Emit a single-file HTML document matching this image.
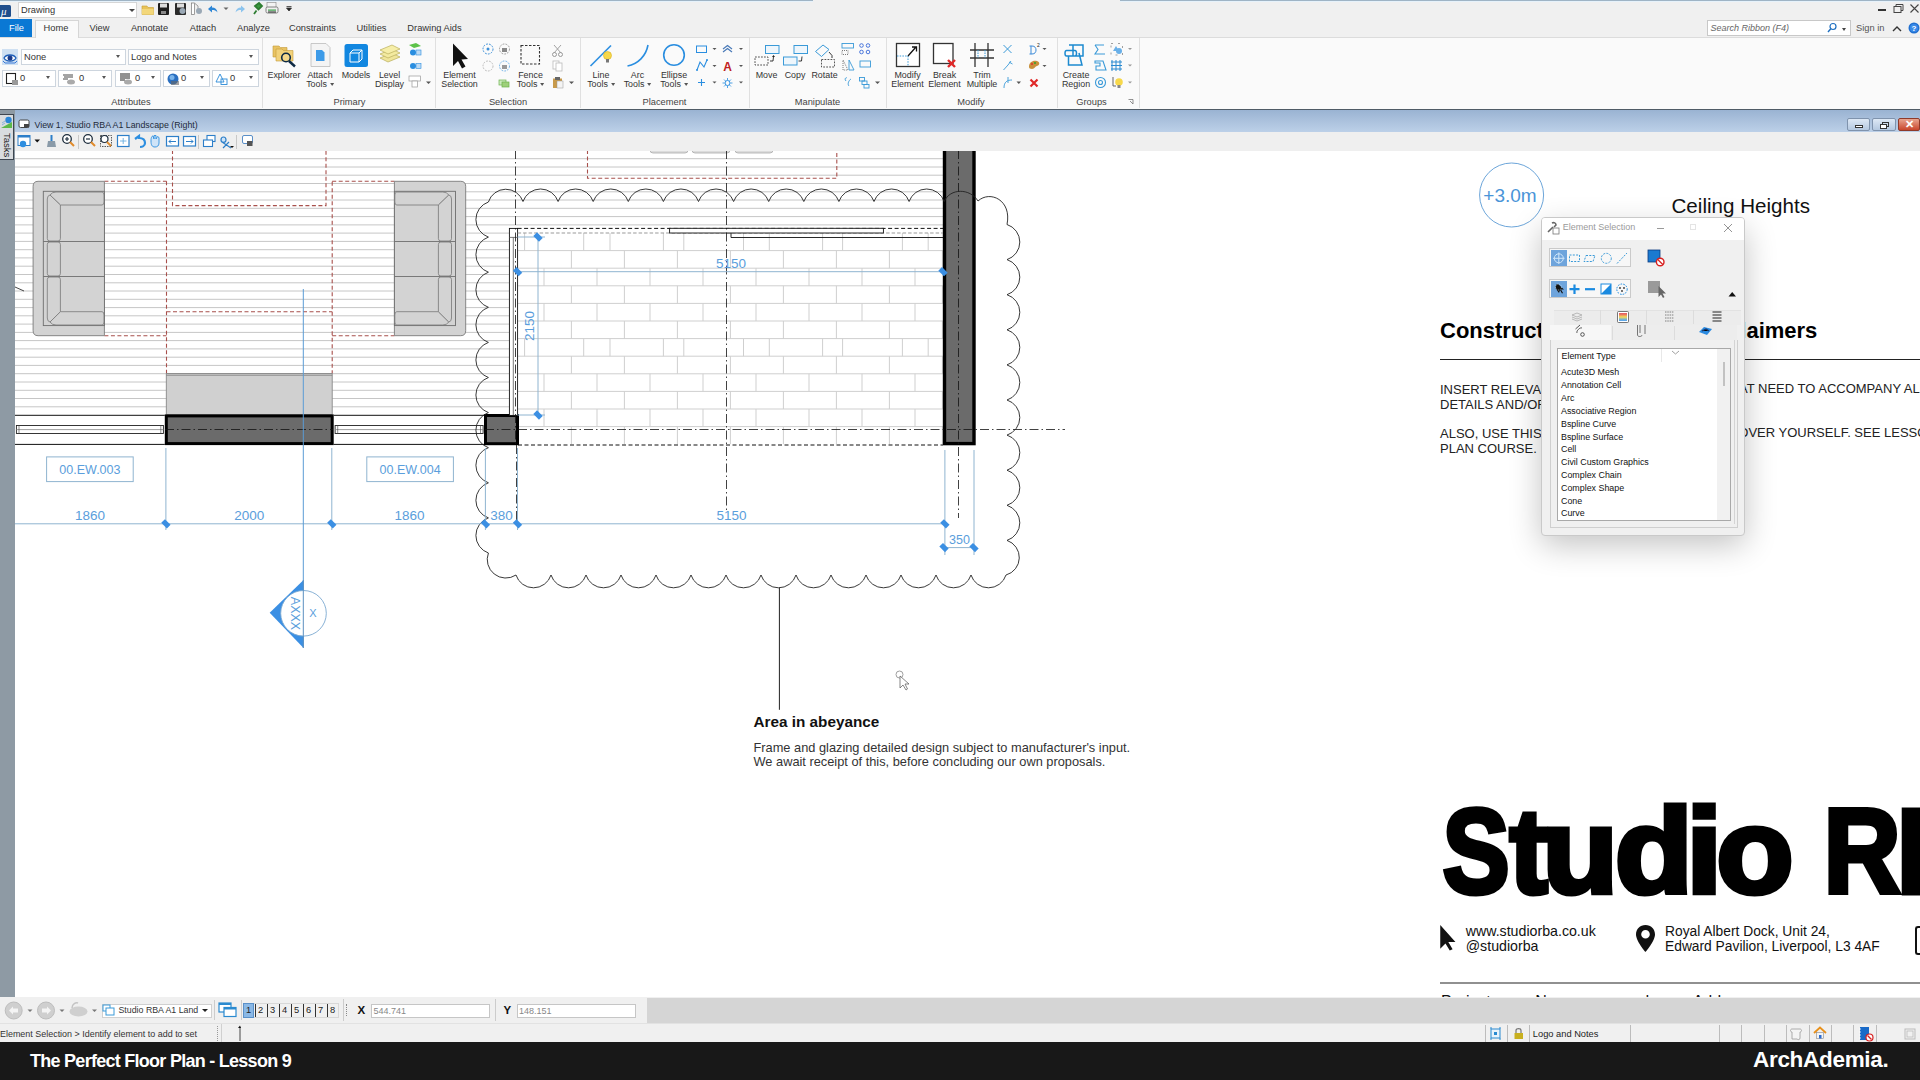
<!DOCTYPE html>
<html><head><meta charset="utf-8">
<style>
*{margin:0;padding:0;box-sizing:border-box}
html,body{width:1920px;height:1080px;overflow:hidden;background:#fff;font-family:"Liberation Sans",sans-serif;font-size:9.3px;color:#333}
.a{position:absolute}
.t{position:absolute;white-space:nowrap;line-height:1}
.c{position:absolute;white-space:nowrap;line-height:1;transform:translateX(-50%)}
svg{position:absolute;overflow:visible}

</style></head><body>
<div class="a" style="left:0;top:0;width:1920px;height:37px;background:#f0f0f0"></div>
<div class="a" style="left:0;top:0;width:813px;height:2px;background:linear-gradient(#9fb4c5 50%,#e6f2fb 50%)"></div>
<div class="a" style="left:1120px;top:0;width:800px;height:2px;background:linear-gradient(#9fb4c5 50%,#e6f2fb 50%)"></div>
<div class="a" style="left:0;top:37px;width:1920px;height:73px;background:#fafafa;border-top:1px solid #dcdcdc;border-bottom:1px solid #555d66"></div>
<div class="a" style="left:0;top:110px;width:15px;height:887px;background:#8e9aa4"></div>
<div class="a" style="left:0;top:997px;width:1920px;height:45px;background:#f0f0f0"></div>
<div class="a" style="left:0;top:1042px;width:1920px;height:38px;background:#181818">
<div class="t" style="left:30px;top:10px;font-size:18px;font-weight:bold;color:#fff;letter-spacing:-0.73px">The Perfect Floor Plan - Lesson 9</div>
<div class="t" style="left:1753px;top:7px;font-size:22.5px;font-weight:bold;color:#fff;letter-spacing:-0.3px">ArchAdemia.</div>
</div>
<svg width="14" height="14" style="left:0;top:4px"><rect x="-2" y="1" width="13" height="12" rx="1.5" fill="#1f4e8c"/><text x="1" y="10.5" font-family="Liberation Serif" font-style="italic" font-size="11" fill="#fff">μ</text></svg>
<div class="a" style="left:18px;top:2px;width:119px;height:15.5px;background:#fff;border:1px solid #d6d6d6"><div class="t" style="left:2px;top:2.5px;font-size:9.3px;color:#333">Drawing</div><div class="a" style="left:110px;top:6px;border:3px solid transparent;border-top:3.5px solid #444;border-bottom:none"></div></div>
<svg width="160" height="19" style="left:140px;top:0" viewBox="140 0 160 19">
<path d="M142 6H147L148 7.5H153.5V14.5H142Z" fill="#e8c35a" stroke="#c8a030" stroke-width="0.6"/><path d="M142 9H153.5V14.5H142Z" fill="#f3d77a"/>
<rect x="158" y="3" width="11" height="12" rx="1" fill="#1e1e1e"/><rect x="160" y="3.5" width="7" height="4" fill="#ddd"/><rect x="161" y="11" width="5" height="3" fill="#888"/>
<rect x="175" y="3" width="11" height="12" rx="1" fill="#2a2a2a"/><rect x="177" y="3.5" width="7" height="4" fill="#ddd"/><circle cx="182.5" cy="11" r="3" fill="#9aa8b5"/>
<rect x="191.5" y="3" width="3" height="11.5" fill="#fff" stroke="#777" stroke-width="0.7"/><path d="M195 3.5L198 6V9" stroke="#888" stroke-width="0.8" fill="none"/><circle cx="199" cy="11" r="3" fill="#9aa8b5"/>
<path d="M208 9L212 5.5V7.5C215 7.5 217 9 217.5 12.5C216 10.5 214.5 10 212 10V12.5Z" fill="#2d86d6"/>
<path d="M223.5 7.5H228.5L226 10Z" fill="#666"/>
<path d="M245 9L241 5.5V7.5C238 7.5 236 9 235.5 12.5C237 10.5 238.5 10 241 10V12.5Z" fill="#8cc4ee"/>
<path d="M254 14L256.5 10.5M255 6L259 3L262 6L258.5 9.5Z" stroke="#2e7d32" stroke-width="1.8" fill="#3a9a3f"/>
<rect x="267" y="2.5" width="9" height="5" fill="#f3f3f3" stroke="#888" stroke-width="0.6"/><rect x="266" y="7" width="12" height="6" rx="1.5" fill="#f0f0f0" stroke="#666" stroke-width="0.8"/><rect x="268" y="9.5" width="8" height="1.2" fill="#3aa04a"/><rect x="268" y="11.5" width="8" height="1" fill="#222"/>
<path d="M286.5 6.5H291.5M286.5 8H291.5L289 11Z" stroke="#333" stroke-width="0.8" fill="#222"/>
</svg>
<div class="a" style="left:1878px;top:9px;width:8px;height:2px;background:#333"></div>
<svg width="12" height="12" style="left:1893px;top:3px"><rect x="1" y="3.5" width="7" height="6" fill="none" stroke="#444" stroke-width="1"/><path d="M3 3.5V1.5H10V7.5H8" fill="none" stroke="#444" stroke-width="1"/></svg>
<svg width="12" height="12" style="left:1909px;top:3px"><path d="M1.5 1.5L9.5 9.5M9.5 1.5L1.5 9.5" stroke="#444" stroke-width="1.1"/></svg>
<div class="a" style="left:0;top:19px;width:32px;height:18px;background:#0a78d4"><div class="t" style="left:9px;top:4.5px;font-size:9.3px;color:#fff">File</div></div>
<div class="a" style="left:34.5px;top:19.5px;width:44px;height:18.5px;background:#fafafa;border:1px solid #d6d6d6;border-bottom:none"></div>
<div class="c" style="left:56px;top:23.5px;font-size:9.3px;color:#333">Home</div>
<div class="c" style="left:99.5px;top:23.5px;font-size:9.3px;color:#333">View</div>
<div class="c" style="left:149.5px;top:23.5px;font-size:9.3px;color:#333">Annotate</div>
<div class="c" style="left:203px;top:23.5px;font-size:9.3px;color:#333">Attach</div>
<div class="c" style="left:253.5px;top:23.5px;font-size:9.3px;color:#333">Analyze</div>
<div class="c" style="left:312.5px;top:23.5px;font-size:9.3px;color:#333">Constraints</div>
<div class="c" style="left:371.5px;top:23.5px;font-size:9.3px;color:#333">Utilities</div>
<div class="c" style="left:434.5px;top:23.5px;font-size:9.3px;color:#333">Drawing Aids</div>
<div class="a" style="left:1706.5px;top:20px;width:144px;height:16px;background:#fff;border:1px solid #c8c8c8"><div class="t" style="left:3px;top:3px;font-size:9px;font-style:italic;color:#666">Search Ribbon (F4)</div></div>
<svg width="12" height="12" style="left:1826px;top:22px"><circle cx="7" cy="4.5" r="3" fill="none" stroke="#1f6fc0" stroke-width="1.2"/><path d="M5 6.5L2 10" stroke="#1f6fc0" stroke-width="1.4"/></svg>
<div class="a" style="left:1841.5px;top:27.5px;border:2.5px solid transparent;border-top:3px solid #444;border-bottom:none"></div>
<div class="t" style="left:1856px;top:23.5px;font-size:9.3px;color:#555">Sign in</div>
<svg width="12" height="10" style="left:1891px;top:24px"><path d="M2 7L6 3L10 7" stroke="#333" stroke-width="1.4" fill="none"/></svg>
<svg width="12" height="12" style="left:1908px;top:22px"><circle cx="6" cy="6" r="5.5" fill="#1f6fd0"/><circle cx="6" cy="6" r="4" fill="#3a8ae8"/><text x="3.5" y="9" font-size="8" font-weight="bold" fill="#fff" font-family="Liberation Sans">?</text></svg>
<div class="a" style="left:262px;top:38px;width:1px;height:70px;background:#e0e0e0"></div>
<div class="a" style="left:435px;top:38px;width:1px;height:70px;background:#e0e0e0"></div>
<div class="a" style="left:579.5px;top:38px;width:1px;height:70px;background:#e0e0e0"></div>
<div class="a" style="left:749px;top:38px;width:1px;height:70px;background:#e0e0e0"></div>
<div class="a" style="left:886px;top:38px;width:1px;height:70px;background:#e0e0e0"></div>
<div class="a" style="left:1056.5px;top:38px;width:1px;height:70px;background:#e0e0e0"></div>
<div class="a" style="left:1138.5px;top:38px;width:1px;height:70px;background:#e0e0e0"></div>
<div class="c" style="left:131px;top:97.5px;font-size:9.3px;color:#444">Attributes</div>
<div class="c" style="left:349.5px;top:97.5px;font-size:9.3px;color:#444">Primary</div>
<div class="c" style="left:508px;top:97.5px;font-size:9.3px;color:#444">Selection</div>
<div class="c" style="left:664.5px;top:97.5px;font-size:9.3px;color:#444">Placement</div>
<div class="c" style="left:817.5px;top:97.5px;font-size:9.3px;color:#444">Manipulate</div>
<div class="c" style="left:971px;top:97.5px;font-size:9.3px;color:#444">Modify</div>
<div class="c" style="left:1091.5px;top:97.5px;font-size:9.3px;color:#444">Groups</div>
<div class="a" style="left:2px;top:48.5px;width:16px;height:16.5px;background:#cfe0f2"></div>
<svg width="16" height="14" style="left:2px;top:50px"><path d="M2 8C4 4 12 4 14 8C12 12 4 12 2 8Z" fill="#fff" stroke="#1f5fb8" stroke-width="1.3"/><circle cx="8" cy="8" r="2.5" fill="#1a3a8a"/><path d="M1 11L3 13H13L15 11" stroke="#3a7ad8" stroke-width="1" fill="none"/></svg>
<div class="a" style="left:20.5px;top:48.5px;width:105px;height:16.5px;background:#fff;border:1px solid #cdd5de"><div class="t" style="left:2.5px;top:3.0999999999999996px;font-size:9.3px;color:#333">None</div><div class="a" style="left:94px;top:5.25px;border:2.5px solid transparent;border-top:3px solid #555;border-bottom:none"></div></div>
<div class="a" style="left:128px;top:48.5px;width:130.5px;height:16.5px;background:#fff;border:1px solid #cdd5de"><div class="t" style="left:2px;top:3.0999999999999996px;font-size:9.3px;color:#333">Logo and Notes</div><div class="a" style="left:119.5px;top:5.25px;border:2.5px solid transparent;border-top:3px solid #555;border-bottom:none"></div></div>
<div class="a" style="left:2px;top:70px;width:53.6px;height:16.5px;background:#fff;border:1px solid #cdd5de"><svg width="14" height="14" style="left:2px;top:1px"><rect x="1.5" y="1.5" width="9" height="10" fill="#fff" stroke="#222" stroke-width="1.1"/><rect x="7" y="8" width="6" height="5" fill="#999"/></svg><div class="t" style="left:17px;top:3.0999999999999996px;font-size:9.3px;color:#333">0</div><div class="a" style="left:42.6px;top:5.25px;border:2.5px solid transparent;border-top:3px solid #555;border-bottom:none"></div></div>
<div class="a" style="left:58.4px;top:70px;width:53.6px;height:16.5px;background:#fff;border:1px solid #cdd5de"><svg width="14" height="14" style="left:3px;top:1px"><path d="M1 3H11M2 5H11M1 7H6" stroke="#333" stroke-width="0.9" fill="none"/><ellipse cx="9" cy="10" rx="4" ry="2.5" fill="#aaa"/></svg><div class="t" style="left:19.5px;top:3.0999999999999996px;font-size:9.3px;color:#333">0</div><div class="a" style="left:42.6px;top:5.25px;border:2.5px solid transparent;border-top:3px solid #555;border-bottom:none"></div></div>
<div class="a" style="left:114.6px;top:70px;width:46.2px;height:16.5px;background:#fff;border:1px solid #cdd5de"><svg width="14" height="14" style="left:3px;top:1px"><path d="M1 2H11M1 4H11M1 6H11M1 8H6" stroke="#222" stroke-width="1" fill="none"/><ellipse cx="9" cy="10" rx="4" ry="2.5" fill="#aaa"/></svg><div class="t" style="left:19.5px;top:3.0999999999999996px;font-size:9.3px;color:#333">0</div><div class="a" style="left:35.2px;top:5.25px;border:2.5px solid transparent;border-top:3px solid #555;border-bottom:none"></div></div>
<div class="a" style="left:163.4px;top:70px;width:46.2px;height:16.5px;background:#fff;border:1px solid #cdd5de"><svg width="14" height="14" style="left:2px;top:1px"><circle cx="7" cy="7" r="5.5" fill="#2a6fc0"/><circle cx="6" cy="5.5" r="2.5" fill="#7ab4ea"/><rect x="5" y="9" width="8" height="4" fill="#666" opacity="0.6"/></svg><div class="t" style="left:16.5px;top:3.0999999999999996px;font-size:9.3px;color:#333">0</div><div class="a" style="left:35.2px;top:5.25px;border:2.5px solid transparent;border-top:3px solid #555;border-bottom:none"></div></div>
<div class="a" style="left:212.4px;top:70px;width:46.2px;height:16.5px;background:#fff;border:1px solid #cdd5de"><svg width="14" height="14" style="left:2px;top:1px"><path d="M1 10L5 2L9 10Z" fill="none" stroke="#2a8ad8" stroke-width="0.9"/><rect x="6" y="7" width="6" height="5.5" fill="none" stroke="#2a8ad8" stroke-width="0.9"/></svg><div class="t" style="left:16.5px;top:3.0999999999999996px;font-size:9.3px;color:#333">0</div><div class="a" style="left:35.2px;top:5.25px;border:2.5px solid transparent;border-top:3px solid #555;border-bottom:none"></div></div>
<div class="c" style="left:284px;top:71.2px;font-size:8.9px;color:#333">Explorer</div>
<div class="c" style="left:320px;top:71.2px;font-size:8.9px;color:#333">Attach</div><div class="c" style="left:320px;top:80.2px;font-size:8.9px;color:#333">Tools<span style="display:inline-block;margin-left:3px;vertical-align:1px;border:2.5px solid transparent;border-top:3px solid #555;border-bottom:none"></span></div>
<div class="c" style="left:356px;top:71.2px;font-size:8.9px;color:#333">Models</div>
<div class="c" style="left:389.5px;top:71.2px;font-size:8.9px;color:#333">Level</div><div class="c" style="left:389.5px;top:80.2px;font-size:8.9px;color:#333">Display</div>
<div class="c" style="left:459.5px;top:71.2px;font-size:8.9px;color:#333">Element</div><div class="c" style="left:459.5px;top:80.2px;font-size:8.9px;color:#333">Selection</div>
<div class="c" style="left:530.5px;top:71.2px;font-size:8.9px;color:#333">Fence</div><div class="c" style="left:530.5px;top:80.2px;font-size:8.9px;color:#333">Tools<span style="display:inline-block;margin-left:3px;vertical-align:1px;border:2.5px solid transparent;border-top:3px solid #555;border-bottom:none"></span></div>
<div class="c" style="left:601px;top:71.2px;font-size:8.9px;color:#333">Line</div><div class="c" style="left:601px;top:80.2px;font-size:8.9px;color:#333">Tools<span style="display:inline-block;margin-left:3px;vertical-align:1px;border:2.5px solid transparent;border-top:3px solid #555;border-bottom:none"></span></div>
<div class="c" style="left:637.5px;top:71.2px;font-size:8.9px;color:#333">Arc</div><div class="c" style="left:637.5px;top:80.2px;font-size:8.9px;color:#333">Tools<span style="display:inline-block;margin-left:3px;vertical-align:1px;border:2.5px solid transparent;border-top:3px solid #555;border-bottom:none"></span></div>
<div class="c" style="left:674px;top:71.2px;font-size:8.9px;color:#333">Ellipse</div><div class="c" style="left:674px;top:80.2px;font-size:8.9px;color:#333">Tools<span style="display:inline-block;margin-left:3px;vertical-align:1px;border:2.5px solid transparent;border-top:3px solid #555;border-bottom:none"></span></div>
<div class="c" style="left:766.5px;top:71.2px;font-size:8.9px;color:#333">Move</div>
<div class="c" style="left:795px;top:71.2px;font-size:8.9px;color:#333">Copy</div>
<div class="c" style="left:824.5px;top:71.2px;font-size:8.9px;color:#333">Rotate</div>
<div class="c" style="left:907.5px;top:71.2px;font-size:8.9px;color:#333">Modify</div><div class="c" style="left:907.5px;top:80.2px;font-size:8.9px;color:#333">Element</div>
<div class="c" style="left:944.5px;top:71.2px;font-size:8.9px;color:#333">Break</div><div class="c" style="left:944.5px;top:80.2px;font-size:8.9px;color:#333">Element</div>
<div class="c" style="left:982px;top:71.2px;font-size:8.9px;color:#333">Trim</div><div class="c" style="left:982px;top:80.2px;font-size:8.9px;color:#333">Multiple</div>
<div class="c" style="left:1076px;top:71.2px;font-size:8.9px;color:#333">Create</div><div class="c" style="left:1076px;top:80.2px;font-size:8.9px;color:#333">Region</div>
<svg width="900" height="60" style="left:260px;top:40px" viewBox="260 40 900 60">
<!-- explorer -->
<path d="M273 46H279L280.5 47.5H287V57H273Z" fill="#e9c363" stroke="#c49a3a" stroke-width="0.6"/>
<path d="M276 49H282L283.5 50.5H293V61H276Z" fill="#f2d27a" stroke="#c49a3a" stroke-width="0.6"/>
<circle cx="286" cy="57.5" r="4.3" fill="#f5d88a" stroke="#0e2a44" stroke-width="1.6"/><path d="M289 61L295 66.5" stroke="#0e2a44" stroke-width="2.4"/>
<!-- attach -->
<path d="M311 43.5H326L330 47.5V66.5H311Z" fill="#f4f4f4" stroke="#bbb" stroke-width="0.8"/>
<path d="M316 50H322L324.5 52.5V61H316Z" fill="#3d9be8"/>
<!-- models -->
<rect x="344.5" y="44" width="23.5" height="23" rx="2.5" fill="#1287e0"/>
<path d="M350 53L353 50H362V59L359 62H350Z" fill="none" stroke="#fff" stroke-width="1"/><path d="M350 53H359V62M359 53L362 50" stroke="#fff" stroke-width="1" fill="none"/>
<!-- level display -->
<path d="M380 58L392 53L400 57L388 62Z" fill="#efe59a" stroke="#b9ad5a" stroke-width="0.7"/>
<path d="M380 54L392 49L400 53L388 58Z" fill="#f3ea9f" stroke="#b9ad5a" stroke-width="0.7"/>
<path d="M380 50L392 45L400 49L388 54Z" fill="#f6eea8" stroke="#b9ad5a" stroke-width="0.7"/>
<path d="M409 45L416 43L421 46L414 48Z" fill="#5cc24a"/><circle cx="413" cy="52.5" r="3" fill="#2a8ee0"/><rect x="416" y="50" width="5" height="5" fill="#bcdaf4" stroke="#2a8ee0" stroke-width="0.6"/>
<circle cx="413" cy="66" r="3" fill="#2a8ee0"/><rect x="416" y="63.5" width="5" height="5" fill="#bcdaf4" stroke="#2a8ee0" stroke-width="0.6"/>
<rect x="409" y="76" width="11.5" height="5" fill="#fff" stroke="#999" stroke-width="0.7"/><rect x="412" y="81" width="5.5" height="6" fill="#fff" stroke="#999" stroke-width="0.7"/>
<path d="M426 81.5H431L428.5 84Z" fill="#555"/>
<!-- element selection -->
<path d="M453 43.5V66L458 61L462 68.5L465.5 66.5L461.5 59.5L468 59Z" fill="#111"/>
<circle cx="488" cy="49" r="5" fill="none" stroke="#3a8fd8" stroke-width="1" stroke-dasharray="1.8 1.2"/><circle cx="488" cy="49" r="1.5" fill="#3a8fd8"/>
<circle cx="504.5" cy="49" r="5" fill="none" stroke="#999" stroke-width="1" stroke-dasharray="1.8 1.2"/><rect x="502" y="48" width="5" height="4" fill="#888"/>
<circle cx="488" cy="66" r="5" fill="none" stroke="#bbb" stroke-width="1" stroke-dasharray="1.8 1.2"/>
<circle cx="504.5" cy="66" r="5" fill="none" stroke="#6ab0e8" stroke-width="1" stroke-dasharray="1.8 1.2"/><rect x="502" y="65" width="5" height="4" fill="#999"/>
<rect x="499" y="80" width="7" height="5" fill="#cdeac0" stroke="#6ab24a" stroke-width="0.7"/><rect x="502" y="82" width="7" height="5" fill="#9ed07a" stroke="#6ab24a" stroke-width="0.7"/>
<rect x="521" y="45.5" width="18.5" height="18.5" fill="none" stroke="#333" stroke-width="1.1" stroke-dasharray="2.5 1.5"/>
<path d="M554 45L561 53M561 45L554 53" stroke="#999" stroke-width="0.9"/><circle cx="554.5" cy="54.5" r="2" fill="none" stroke="#999"/><circle cx="560.5" cy="54.5" r="2" fill="none" stroke="#999"/>
<rect x="553" y="61" width="6" height="8" fill="#fff" stroke="#bbb" stroke-width="0.8"/><rect x="556" y="63" width="6" height="8" fill="#fff" stroke="#bbb" stroke-width="0.8"/>
<rect x="553" y="78.5" width="9" height="9.5" fill="#c89a4a"/><rect x="555" y="77" width="5" height="3" fill="#666"/><rect x="557" y="81" width="6" height="7" fill="#f4f4f4" stroke="#999" stroke-width="0.5"/>
<path d="M569 81.5H574L571.5 84Z" fill="#555"/>
<!-- line tools -->
<path d="M590.5 66L611 45.5" stroke="#2a8ee0" stroke-width="1.6"/><circle cx="607.5" cy="55.5" r="4" fill="#f7d84a" stroke="#d9b020" stroke-width="0.6"/><rect x="606" y="59" width="3" height="3.5" fill="#777"/>
<path d="M627.5 66C638 64 646 56 648 45" stroke="#2a8ee0" stroke-width="1.6" fill="none"/>
<circle cx="674" cy="55" r="10.3" fill="none" stroke="#2a8ee0" stroke-width="1.6"/>
<rect x="696.5" y="46" width="10" height="6.5" fill="none" stroke="#2a8ee0" stroke-width="1"/>
<path d="M697 70L700 62L704 67L707 60" stroke="#2a8ee0" stroke-width="1.1" fill="none"/><circle cx="697" cy="70" r="1" fill="#2a8ee0"/><circle cx="707" cy="60" r="1" fill="#2a8ee0"/>
<path d="M701.5 79V86M698 82.5H705" stroke="#2a8ee0" stroke-width="1.1"/>
<path d="M712.5 48H716.5L714.5 50Z M712.5 65H716.5L714.5 67Z M712.5 81.5H716.5L714.5 83.5Z M739 48H743L741 50Z M739 65H743L741 67Z M739 81.5H743L741 83.5Z" fill="#555"/>
<path d="M723 49L727.5 45.5L732 49M723 52L727.5 48.5L732 52" stroke="#4a7ab8" stroke-width="1.2" fill="none"/>
<text x="727.5" y="70.5" font-family="Liberation Sans" font-weight="bold" font-size="12" fill="#c02020" text-anchor="middle">A</text>
<circle cx="727.5" cy="83" r="2.5" fill="none" stroke="#2a8ee0" stroke-width="1"/><path d="M727.5 78V80M727.5 86V88M722.5 83H724.5M730.5 83H732.5M724 79.5L725.5 81M729.5 85L731 86.5M731 79.5L729.5 81M725.5 85L724 86.5" stroke="#2a8ee0" stroke-width="0.8"/>
<!-- move copy rotate -->
<rect x="765.5" y="45.5" width="13.5" height="8" fill="#eef6fc" stroke="#3a9ad8" stroke-width="1"/><rect x="755" y="57" width="13" height="8" fill="none" stroke="#444" stroke-width="0.9" stroke-dasharray="1.8 1.2"/><path d="M770 61H773L773.5 56.5" stroke="#222" stroke-width="0.9" fill="none"/><path d="M772 57L773.5 55L775 57Z" fill="#222"/>
<rect x="794" y="45.5" width="13.5" height="8" fill="#eef6fc" stroke="#3a9ad8" stroke-width="1"/><rect x="783.5" y="57" width="13.5" height="8" fill="#eef6fc" stroke="#3a9ad8" stroke-width="1"/><path d="M798.5 61H801.5L802 56.5" stroke="#222" stroke-width="0.9" fill="none"/>
<path d="M815.5 51.5L823 45L829 49.5L821.5 56.5Z" fill="none" stroke="#3a9ad8" stroke-width="1"/><rect x="821.5" y="59.5" width="13" height="7.5" fill="none" stroke="#444" stroke-width="0.9" stroke-dasharray="1.8 1.2"/><path d="M829 52L832 55.5L832 58" stroke="#222" stroke-width="0.9" fill="none"/>
<rect x="842" y="43.5" width="11.5" height="4.5" fill="none" stroke="#3a9ad8" stroke-width="0.9"/><rect x="842" y="50.5" width="6" height="4" fill="none" stroke="#444" stroke-width="0.7" stroke-dasharray="1 1"/>
<circle cx="861.5" cy="45.5" r="1.8" fill="none" stroke="#3a6ad8" stroke-width="0.9"/><circle cx="868" cy="45.5" r="1.8" fill="none" stroke="#3a6ad8" stroke-width="0.9"/><circle cx="861.5" cy="52" r="1.8" fill="none" stroke="#3a6ad8" stroke-width="0.9"/><circle cx="868" cy="52" r="1.8" fill="none" stroke="#3a6ad8" stroke-width="0.9"/>
<path d="M843 70V60L848 70Z" fill="none" stroke="#444" stroke-width="0.7" stroke-dasharray="1 1"/><path d="M849 70V60L854 70Z" fill="none" stroke="#3a9ad8" stroke-width="0.9"/>
<rect x="860" y="61" width="10.5" height="6" fill="none" stroke="#3a9ad8" stroke-width="0.9"/>
<path d="M846 81C844 79 846 77 847 78M849 86C847 84 849 80 851 79" stroke="#3a9ad8" stroke-width="0.9" fill="none"/>
<rect x="859.5" y="77.5" width="5" height="3.5" fill="none" stroke="#3a9ad8" stroke-width="0.9"/><rect x="862" y="81" width="5" height="3.5" fill="none" stroke="#3a9ad8" stroke-width="0.9"/><rect x="864" y="84.5" width="5" height="3.5" fill="none" stroke="#3a9ad8" stroke-width="0.9"/>
<path d="M875 81.5H880L877.5 84Z" fill="#555"/>
<!-- modify -->
<rect x="896.5" y="43.5" width="23" height="23" fill="#fff" stroke="#333" stroke-width="1.3"/><path d="M897 56H908V66" stroke="#3a9ad8" stroke-width="1" stroke-dasharray="1.5 1.2" fill="none"/><path d="M908 56L916 47M912 47H916.5V51.5" stroke="#111" stroke-width="1.3" fill="none"/>
<rect x="933.5" y="43.5" width="19.5" height="20" fill="#fff" stroke="#333" stroke-width="1.3"/><path d="M948 60L955 67M955 60L948 67" stroke="#e02828" stroke-width="2.4"/>
<path d="M970 50H994M970 58H994M975 43V67M988 43V67" stroke="#333" stroke-width="1.3"/><path d="M978 50V58M985 50V58" stroke="#3a9ad8" stroke-width="1" stroke-dasharray="1.5 1"/>
<path d="M1003.5 45L1011.5 53M1011.5 45L1003.5 53" stroke="#3a9ad8" stroke-width="1"/>
<path d="M1003.5 70L1008 65M1008 65L1011 61M1009 62L1012.5 64" stroke="#3a9ad8" stroke-width="0.9"/>
<path d="M1004 88C1004 82 1007 80 1012 80M1008 77V83" stroke="#3a9ad8" stroke-width="0.9" fill="none"/>
<path d="M1016.5 81.5H1021L1018.8 84Z" fill="#555"/>
<path d="M1029.5 46L1032 46C1035 46 1036 48 1036 50C1036 52 1035 54 1032 54H1029.5M1031 46V54" stroke="#3a8ad8" stroke-width="1" fill="none"/><text x="1037" y="47" font-size="5" fill="#222" font-family="Liberation Sans">2</text>
<path d="M1029 67C1029 62 1033 60 1037 61C1040 62 1040 65 1037 66C1035 66 1035 69 1032 69C1030 69 1029 68 1029 67Z" fill="#c8903a"/><circle cx="1032" cy="64" r="1" fill="#e03030"/><circle cx="1035" cy="63" r="1" fill="#30a030"/>
<path d="M1030.5 79.5L1037.5 86.5M1037.5 79.5L1030.5 86.5" stroke="#e02828" stroke-width="2.2"/>
<path d="M1042.5 48H1046.5L1044.5 50Z M1042.5 65H1046.5L1044.5 67Z" fill="#555"/>
<!-- groups -->
<path d="M1069 45H1083V56H1073V45M1066.5 50.5H1075C1077 50.5 1077 56 1075 56H1066.5C1064.5 56 1064.5 50.5 1066.5 50.5M1068.5 56V65H1082L1079 53" stroke="#1d8ad0" stroke-width="1.5" fill="none"/>
<path d="M1095 45H1104M1095 45L1098 49.5L1095 54H1105" stroke="#3a9ad8" stroke-width="1.1" fill="none"/>
<path d="M1095 61H1103L1106 70H1096V66H1100V63H1095Z" stroke="#3a9ad8" stroke-width="1.1" fill="none"/>
<circle cx="1100.5" cy="82.5" r="5" fill="none" stroke="#3a9ad8" stroke-width="1.1"/><circle cx="1100.5" cy="82.5" r="2" fill="none" stroke="#3a9ad8" stroke-width="1.1"/>
<rect x="1111" y="43.5" width="11.5" height="11.5" fill="none" stroke="#888" stroke-width="0.8" stroke-dasharray="2 5"/><path d="M1113 51L1116 46L1119 51Z" fill="#6ab0e8"/><circle cx="1119" cy="51" r="3" fill="#6ab0e8"/>
<path d="M1112 60V71M1116 60V71M1120 60V71M1111 62H1122M1111 65.5H1122M1111 69H1122" stroke="#2a8ad0" stroke-width="1"/>
<path d="M1113 77V86H1116" stroke="#666" stroke-width="1" fill="none"/><circle cx="1119" cy="82" r="3.8" fill="#f7d84a"/><rect x="1117.5" y="85" width="3" height="3" fill="#888"/>
<path d="M1128 48H1132L1130 50Z M1128 64.5H1132L1130 66.5Z M1128 81.5H1132L1130 83.5Z" fill="#999"/>
<path d="M1128.5 99.5H1133V104M1130 101L1133 104" stroke="#666" stroke-width="0.7" fill="none"/>
</svg><div class="a" style="left:15px;top:109px;width:1905px;height:1px;background:#4f5b66"></div>
<div class="a" style="left:15px;top:110px;width:1905px;height:22px;background:linear-gradient(#9ab3d2,#bcd0e8)"></div>
<div class="a" style="left:0;top:113.5px;width:14px;height:46px;background:#d9dcdf;border:1px solid #3e4650;border-left:none"></div>
<svg width="12" height="13" style="left:1px;top:116px"><circle cx="7.5" cy="4" r="3.2" fill="#2a86d8"/><path d="M0 12L11 6V12Z" fill="#5cb84a"/><path d="M1 7L4 5M1 9L4 7" stroke="#7aa8d8" stroke-width="0.8"/></svg>
<div class="t" style="left:1px;top:133px;font-size:9.5px;color:#222;transform-origin:0 0;transform:translate(11px,0) rotate(90deg)">Tasks</div>
<svg width="14" height="12" style="left:18px;top:118px"><rect x="1" y="2" width="10" height="7.5" rx="1.5" fill="#fff" stroke="#444" stroke-width="1"/><rect x="6" y="6" width="5" height="3.5" fill="#444"/></svg>
<div class="t" style="left:34.5px;top:120.5px;font-size:8.8px;color:#1e2a3a">View 1, Studio RBA A1 Landscape (Right)</div>
<div class="a" style="left:1847px;top:117.5px;width:23px;height:13px;border:1px solid #7f93ad;border-radius:2px;background:linear-gradient(#dde8f5,#b4c8e0)"><div class="a" style="left:7px;top:6px;width:8px;height:3px;border:1px solid #333;background:#fff"></div></div>
<div class="a" style="left:1872px;top:117.5px;width:24px;height:13px;border:1px solid #7f93ad;border-radius:2px;background:linear-gradient(#dde8f5,#b4c8e0)"><div class="a" style="left:9px;top:3px;width:7px;height:5px;border:1px solid #333"></div><div class="a" style="left:7px;top:5px;width:7px;height:5px;border:1px solid #333;background:#fff"></div></div>
<div class="a" style="left:1898px;top:117.5px;width:22px;height:13px;border:1px solid #8e3a2a;border-radius:2px;background:linear-gradient(#e8a48f,#c9462c)"><div class="t" style="left:6px;top:0px;font-size:11px;font-weight:bold;color:#fff">✕</div></div>
<div class="a" style="left:15px;top:132px;width:1905px;height:19px;background:#efefef"></div>
<svg width="250" height="16" style="left:15px;top:133px" viewBox="15 133 250 16">
<rect x="18" y="135.5" width="12" height="10" fill="#fff" stroke="#2d7fc9" stroke-width="1"/><rect x="18" y="135.5" width="12" height="2" fill="#2d7fc9"/><circle cx="23" cy="144" r="3.2" fill="#2d8ee0"/>
<path d="M34.5 139.5H40L37.2 142.5Z" fill="#111"/>
<path d="M51.5 135V141" stroke="#2d7fc9" stroke-width="2"/><path d="M48 141H55L56 147H47Z" fill="#8a9aa8"/>
<circle cx="67" cy="139" r="4.3" fill="#fff" stroke="#1d2d3d" stroke-width="1.3"/><path d="M65 139H69M67 137V141" stroke="#1d2d3d" stroke-width="1.2"/><path d="M70 142L74 146" stroke="#e08a2a" stroke-width="2"/>
<path d="M78.5 135V149" stroke="#c8c8c8"/>
<circle cx="88" cy="139" r="4.3" fill="#fff" stroke="#1d2d3d" stroke-width="1.3"/><path d="M86 139H90" stroke="#1d2d3d" stroke-width="1.2"/><path d="M91 142L95 146" stroke="#e08a2a" stroke-width="2"/>
<rect x="100.5" y="135.5" width="11" height="11" fill="none" stroke="#333" stroke-width="0.8" stroke-dasharray="1.5 1"/><circle cx="104.5" cy="139" r="3.5" fill="#fff" stroke="#1d2d3d" stroke-width="1.2"/><path d="M107 142L111 146" stroke="#e08a2a" stroke-width="1.8"/>
<rect x="117.5" y="135.5" width="11.5" height="11" fill="#fff" stroke="#2d7fc9" stroke-width="1.2"/><path d="M123.2 138V144M120 141H126.5" stroke="#6aaee0" stroke-width="0.9"/>
<path d="M135 139L139 136V138C143 138 145 140 145 143C145 146 142 147 140 147" fill="none" stroke="#2d8ee0" stroke-width="2.2"/>
<path d="M151 141C151 137 152 136 153 136L154 139V135.5L156 135.5V139L157.5 136.5L159 137.5V143C159 146 157 147 155 147C152 147 151 145 151 141Z" fill="#cfe4f8" stroke="#2d8ee0" stroke-width="0.9"/>
<rect x="166.5" y="136.5" width="12" height="9.5" fill="#fff" stroke="#2d7fc9" stroke-width="1.2"/><path d="M169 141.5H176M169 141.5L171 139.5M169 141.5L171 143.5" stroke="#2d7fc9" stroke-width="1"/>
<rect x="183.5" y="136.5" width="12" height="9.5" fill="#fff" stroke="#2d7fc9" stroke-width="1.2"/><path d="M186 141.5H193M193 141.5L191 139.5M193 141.5L191 143.5" stroke="#2d7fc9" stroke-width="1"/>
<path d="M198.5 135V149" stroke="#c8c8c8"/>
<rect x="207" y="135.5" width="8" height="6" fill="#fff" stroke="#2d7fc9" stroke-width="1.1"/><rect x="203.5" y="140" width="9" height="6.5" fill="#fff" stroke="#2d7fc9" stroke-width="1.1"/>
<path d="M221 140C221 136 226 136 226 140C226 143 221 143 221 140ZM222 142L231 148M229 142L223 148" stroke="#2d7fc9" stroke-width="1.2" fill="#cfe4f8"/><path d="M230 146H234L232 148Z" fill="#111"/>
<path d="M236.5 135V149" stroke="#c8c8c8"/>
<rect x="242.5" y="135.5" width="10" height="8" rx="1.5" fill="#fff" stroke="#5a8fc8" stroke-width="1"/><rect x="247" y="141" width="5.5" height="5" fill="#555"/>
</svg>
<div class="a" style="left:15px;top:151px;width:1905px;height:846px;overflow:hidden;background:#fff">
<svg width="1905" height="846" viewBox="15 151 1905 846" style="left:0;top:0">
<path d="M15 158.7H943M15 167.0H943M15 175.2H943M15 183.5H943M15 191.8H943M15 200.0H943M15 208.3H943M15 216.6H943M15 224.9H943M15 233.1H509.4M15 241.4H509.4M15 249.7H509.4M15 257.9H509.4M15 266.2H509.4M15 274.5H509.4M15 282.8H509.4M15 291.0H509.4M15 299.3H509.4M15 307.6H509.4M15 315.8H509.4M15 324.1H509.4M15 332.4H509.4M15 340.6H509.4M15 348.9H509.4M15 357.2H509.4M15 365.4H509.4M15 373.7H509.4M15 382.0H509.4M15 390.3H509.4M15 398.5H509.4M15 406.8H509.4" stroke="#c6c6c6" stroke-width="1" fill="none"/>
<path d="M517.6 250.6H943M517.6 268.2H943M517.6 285.8H943M517.6 303.4H943M517.6 321.0H943M517.6 338.6H943M517.6 356.2H943M517.6 373.8H943M517.6 391.4H943M517.6 409.0H943M517.6 426.6H943M524.6 233.0V250.6M583.7 233.0V250.6M610.0 233.0V250.6M663.4 233.0V250.6M683.8 233.0V250.6M743.5 233.0V250.6M769.3 233.0V250.6M822.6 233.0V250.6M842.6 233.0V250.6M902.4 233.0V250.6M928.2 233.0V250.6M571.4 250.6V268.2M624.4 250.6V268.2M677.4 250.6V268.2M730.4 250.6V268.2M783.4 250.6V268.2M836.4 250.6V268.2M889.4 250.6V268.2M942.4 250.6V268.2M544.0 268.2V285.8M597.0 268.2V285.8M650.0 268.2V285.8M703.0 268.2V285.8M756.0 268.2V285.8M809.0 268.2V285.8M862.0 268.2V285.8M915.0 268.2V285.8M571.4 285.8V303.4M624.4 285.8V303.4M677.4 285.8V303.4M730.4 285.8V303.4M783.4 285.8V303.4M836.4 285.8V303.4M889.4 285.8V303.4M942.4 285.8V303.4M544.0 303.4V321.0M597.0 303.4V321.0M650.0 303.4V321.0M703.0 303.4V321.0M756.0 303.4V321.0M809.0 303.4V321.0M862.0 303.4V321.0M915.0 303.4V321.0M571.4 321.0V338.6M624.4 321.0V338.6M677.4 321.0V338.6M730.4 321.0V338.6M783.4 321.0V338.6M836.4 321.0V338.6M889.4 321.0V338.6M942.4 321.0V338.6M524.6 338.6V356.2M583.7 338.6V356.2M610.0 338.6V356.2M663.4 338.6V356.2M683.8 338.6V356.2M743.5 338.6V356.2M769.3 338.6V356.2M822.6 338.6V356.2M842.6 338.6V356.2M902.4 338.6V356.2M928.2 338.6V356.2M571.4 356.2V373.8M624.4 356.2V373.8M677.4 356.2V373.8M730.4 356.2V373.8M783.4 356.2V373.8M836.4 356.2V373.8M889.4 356.2V373.8M942.4 356.2V373.8M544.0 373.8V391.4M597.0 373.8V391.4M650.0 373.8V391.4M703.0 373.8V391.4M756.0 373.8V391.4M809.0 373.8V391.4M862.0 373.8V391.4M915.0 373.8V391.4M571.4 391.4V409.0M624.4 391.4V409.0M677.4 391.4V409.0M730.4 391.4V409.0M783.4 391.4V409.0M836.4 391.4V409.0M889.4 391.4V409.0M942.4 391.4V409.0M544.0 409.0V426.6M597.0 409.0V426.6M650.0 409.0V426.6M703.0 409.0V426.6M756.0 409.0V426.6M809.0 409.0V426.6M862.0 409.0V426.6M915.0 409.0V426.6M571.4 426.6V444.2M624.4 426.6V444.2M677.4 426.6V444.2M730.4 426.6V444.2M783.4 426.6V444.2M836.4 426.6V444.2M889.4 426.6V444.2M942.4 426.6V444.2" stroke="#cfcfcf" stroke-width="1" fill="none"/>
<path d="M104.4 181.3H166.5M104.4 335.7H166.5M166.5 181.3V373.5M172.5 150V205.6H326V150M332.2 181.7V373.5M332.2 181.3H394.4M332.2 335.7H394.4M166.5 311.7H332.2M587.5 150V178.3H836.8V150" stroke="#a8504c" stroke-width="1.1" stroke-dasharray="4 2.5" fill="none"/>
<rect x="650" y="146" width="38" height="7" rx="3" fill="#dcdcdc" stroke="#aaa" stroke-width="0.8"/>
<rect x="692" y="146" width="38" height="7" rx="3" fill="#dcdcdc" stroke="#aaa" stroke-width="0.8"/>
<rect x="735" y="146" width="38" height="7" rx="3" fill="#dcdcdc" stroke="#aaa" stroke-width="0.8"/>
<path d="M104.4 181.3H38.1Q33.1 181.3 33.1 186.3V330.7Q33.1 335.7 38.1 335.7H104.4Z" fill="#d3d3d3" stroke="#7a7a7a" stroke-width="0.9"/><rect x="43.3" y="191.3" width="61.10000000000001" height="134.3" fill="#d3d3d3" stroke="#6e6e6e" stroke-width="0.9"/><path d="M43.3 241.5H104.4M43.3 276.5H104.4" stroke="#6e6e6e" stroke-width="0.9"/><path d="M56.0 192H102.0Q104.0 192 104.0 195V202Q104.0 205 102.0 205H60.4L50.0 195Q52.0 192 56.0 192Z" fill="#d3d3d3" stroke="#777" stroke-width="0.8"/><path d="M56.0 325H102.0Q104.0 325 104.0 322V315Q104.0 311.7 102.0 311.7H60.4L50.0 322Q52.0 325 56.0 325Z" fill="#d3d3d3" stroke="#777" stroke-width="0.8"/><path d="M47.3 199Q47.3 195.5 50.0 195L60.4 205V238.5Q60.4 241 58.0 241H49.8Q47.3 241 47.3 238.5Z" fill="#d3d3d3" stroke="#777" stroke-width="0.8"/><path d="M47.3 244.5Q47.3 242 49.8 242H58.0Q60.4 242 60.4 244.5V273.5Q60.4 276 58.0 276H49.8Q47.3 276 47.3 273.5Z" fill="#d3d3d3" stroke="#777" stroke-width="0.8"/><path d="M47.3 318Q47.3 321.5 50.0 322L60.4 311.7V279.5Q60.4 277 58.0 277H49.8Q47.3 277 47.3 279.5Z" fill="#d3d3d3" stroke="#777" stroke-width="0.8"/>
<path d="M394.4 181.3H460.7Q465.7 181.3 465.7 186.3V330.7Q465.7 335.7 460.7 335.7H394.4Z" fill="#d3d3d3" stroke="#7a7a7a" stroke-width="0.9"/><rect x="394.4" y="191.3" width="61.10000000000002" height="134.3" fill="#d3d3d3" stroke="#6e6e6e" stroke-width="0.9"/><path d="M455.5 241.5H394.4M455.5 276.5H394.4" stroke="#6e6e6e" stroke-width="0.9"/><path d="M442.8 192H396.79999999999995Q394.79999999999995 192 394.79999999999995 195V202Q394.79999999999995 205 396.79999999999995 205H438.4L448.8 195Q446.8 192 442.8 192Z" fill="#d3d3d3" stroke="#777" stroke-width="0.8"/><path d="M442.8 325H396.79999999999995Q394.79999999999995 325 394.79999999999995 322V315Q394.79999999999995 311.7 396.79999999999995 311.7H438.4L448.8 322Q446.8 325 442.8 325Z" fill="#d3d3d3" stroke="#777" stroke-width="0.8"/><path d="M451.5 199Q451.5 195.5 448.8 195L438.4 205V238.5Q438.4 241 440.8 241H449.0Q451.5 241 451.5 238.5Z" fill="#d3d3d3" stroke="#777" stroke-width="0.8"/><path d="M451.5 244.5Q451.5 242 449.0 242H440.8Q438.4 242 438.4 244.5V273.5Q438.4 276 440.8 276H449.0Q451.5 276 451.5 273.5Z" fill="#d3d3d3" stroke="#777" stroke-width="0.8"/><path d="M451.5 318Q451.5 321.5 448.8 322L438.4 311.7V279.5Q438.4 277 440.8 277H449.0Q451.5 277 451.5 279.5Z" fill="#d3d3d3" stroke="#777" stroke-width="0.8"/>
<rect x="166.3" y="373.5" width="165.9" height="41" fill="#d0d0d0" stroke="#888" stroke-width="0.9"/>
<path d="M166.3 375.2H332.2" stroke="#777" stroke-width="0.8"/>
<path d="M15 415.3H164.8M15 444.4H164.8" stroke="#111" stroke-width="1"/><rect x="16.4" y="425.5" width="147.0" height="8" fill="#fff" stroke="#222" stroke-width="0.9"/><path d="M16.4 429.6H163.4" stroke="#888" stroke-width="0.8"/><path d="M19 425.5V433.5M160.8 425.5V433.5" stroke="#444" stroke-width="0.6"/>
<path d="M333.7 415.3H484.5M333.7 444.4H484.5" stroke="#111" stroke-width="1"/><rect x="335.09999999999997" y="425.5" width="148.0" height="8" fill="#fff" stroke="#222" stroke-width="0.9"/><path d="M335.09999999999997 429.6H483.1" stroke="#888" stroke-width="0.8"/><path d="M337.7 425.5V433.5M480.5 425.5V433.5" stroke="#444" stroke-width="0.6"/>
<rect x="166.3" y="415.9" width="165.9" height="27.7" fill="#6b6b6b" stroke="#000" stroke-width="3"/>
<rect x="485.5" y="415.5" width="32" height="28.2" fill="#6b6b6b" stroke="#000" stroke-width="3"/>
<rect x="944.5" y="140" width="29.5" height="303.6" fill="#6b6b6b" stroke="#000" stroke-width="3.4"/>
<rect x="509.4" y="228.4" width="8.2" height="187" fill="#fff" stroke="#111" stroke-width="0.9"/>
<path d="M509.4 237.4H517.6M513.3 237.4V415" stroke="#555" stroke-width="0.8"/>
<path d="M517.6 228.4H943" stroke="#111" stroke-width="1" stroke-dasharray="4 2.5"/>
<path d="M517.6 233H943" stroke="#999" stroke-width="1.1" stroke-dasharray="3.5 2"/>
<rect x="669.6" y="228.3" width="213.8" height="4.7" fill="#fff" stroke="#111" stroke-width="0.9"/>
<path d="M731 233V237.5H943" stroke="#111" stroke-width="0.9" fill="none"/>
<path d="M518 445H943" stroke="#111" stroke-width="1" stroke-dasharray="4 2.5"/>
<path d="M165 429.5H333M485 429.5H1065M515.5 150V445M726.5 150V513M958.5 150V518M516.5 445V523" stroke="#111" stroke-width="0.8" stroke-dasharray="9 3 1.5 3" fill="none"/>
<path d="M488.4 553.0A18.57 18.57 0 0 1 488.4 517.9A18.57 18.57 0 0 1 488.4 482.8A18.57 18.57 0 0 1 488.4 447.7A18.57 18.57 0 0 1 488.4 412.6A18.57 18.57 0 0 1 488.4 377.5A18.57 18.57 0 0 1 488.4 342.4A18.57 18.57 0 0 1 488.4 307.3A18.57 18.57 0 0 1 488.4 272.2A18.57 18.57 0 0 1 488.4 237.1A18.57 18.57 0 0 1 488.4 202.0A18.22 18.22 0 0 1 523.0 201.5A18.57 18.57 0 0 1 558.1 201.5A18.57 18.57 0 0 1 593.2 201.5A18.57 18.57 0 0 1 628.3 201.5A18.57 18.57 0 0 1 663.4 201.5A18.57 18.57 0 0 1 698.5 201.5A18.57 18.57 0 0 1 733.6 201.5A18.57 18.57 0 0 1 768.7 201.5A18.57 18.57 0 0 1 803.8 201.5A18.57 18.57 0 0 1 838.9 201.5A18.57 18.57 0 0 1 874.0 201.5A18.57 18.57 0 0 1 909.1 201.5A18.57 18.57 0 0 1 944.2 201.5C950 188 970 188 978 201C990 190 1012 200 1007 224.5A18.43 18.43 0 0 1 1007.0 259.6A18.43 18.43 0 0 1 1007.0 294.7A18.43 18.43 0 0 1 1007.0 329.8A18.43 18.43 0 0 1 1007.0 364.9A18.43 18.43 0 0 1 1007.0 400.0A18.43 18.43 0 0 1 1007.0 435.1A18.43 18.43 0 0 1 1007.0 470.2A18.43 18.43 0 0 1 1007.0 505.3A18.43 18.43 0 0 1 1007.0 540.4A18.10 18.10 0 0 1 1006.0 575.0A18.36 18.36 0 0 1 971.0 575.0A18.36 18.36 0 0 1 936.0 575.0A18.36 18.36 0 0 1 901.0 575.0A18.36 18.36 0 0 1 866.0 575.0A18.36 18.36 0 0 1 831.0 575.0A18.36 18.36 0 0 1 796.0 575.0A18.36 18.36 0 0 1 761.0 575.0A18.36 18.36 0 0 1 726.0 575.0A18.36 18.36 0 0 1 691.0 575.0A18.36 18.36 0 0 1 656.0 575.0A18.36 18.36 0 0 1 621.0 575.0A18.36 18.36 0 0 1 586.0 575.0A18.36 18.36 0 0 1 551.0 575.0A18.36 18.36 0 0 1 516.0 575.0A18.57 18.57 0 0 1 488.4 553.0Z" fill="none" stroke="#222" stroke-width="0.9"/>
<path d="M15 523.8H944.9M944 547.6H974M517.6 271.7H943M538 237V415M165.9 448V530M331.8 448V530M485.4 448V530M517.5 448V530M944.9 450V555M974 450V555M517.6 237H545M517.6 415H545" stroke="#8fb4d0" stroke-width="1" fill="none"/>
<path d="M303.3 289V647.8" stroke="#5b9bd5" stroke-width="1"/>
<rect x="163.3" y="519.8" width="5.2" height="8" fill="#3b8fe3" transform="rotate(-45 165.9 523.8)"/>
<rect x="329.2" y="519.8" width="5.2" height="8" fill="#3b8fe3" transform="rotate(-45 331.8 523.8)"/>
<rect x="482.79999999999995" y="519.8" width="5.2" height="8" fill="#3b8fe3" transform="rotate(-45 485.4 523.8)"/>
<rect x="514.9" y="519.8" width="5.2" height="8" fill="#3b8fe3" transform="rotate(-45 517.5 523.8)"/>
<rect x="942.3" y="519.8" width="5.2" height="8" fill="#3b8fe3" transform="rotate(-45 944.9 523.8)"/>
<rect x="941.4" y="543.6" width="5.2" height="8" fill="#3b8fe3" transform="rotate(-45 944 547.6)"/>
<rect x="971.4" y="543.6" width="5.2" height="8" fill="#3b8fe3" transform="rotate(-45 974 547.6)"/>
<rect x="515.0" y="267.7" width="5.2" height="8" fill="#3b8fe3" transform="rotate(-45 517.6 271.7)"/>
<rect x="940.4" y="267.7" width="5.2" height="8" fill="#3b8fe3" transform="rotate(-45 943 271.7)"/>
<rect x="535.4" y="233" width="5.2" height="8" fill="#3b8fe3" transform="rotate(-45 538 237)"/>
<rect x="535.4" y="411" width="5.2" height="8" fill="#3b8fe3" transform="rotate(-45 538 415)"/>
<text x="90" y="520" font-family="Liberation Sans" font-size="13.5" fill="#5a9edc" text-anchor="middle">1860</text>
<text x="249.3" y="520" font-family="Liberation Sans" font-size="13.5" fill="#5a9edc" text-anchor="middle">2000</text>
<text x="409.6" y="520" font-family="Liberation Sans" font-size="13.5" fill="#5a9edc" text-anchor="middle">1860</text>
<text x="501.5" y="520" font-family="Liberation Sans" font-size="13.5" fill="#5a9edc" text-anchor="middle">380</text>
<text x="731.6" y="520" font-family="Liberation Sans" font-size="13.5" fill="#5a9edc" text-anchor="middle">5150</text>
<text x="959.5" y="544" font-family="Liberation Sans" font-size="12.5" fill="#5a9edc" text-anchor="middle">350</text>
<text x="731" y="268" font-family="Liberation Sans" font-size="13.5" fill="#5a9edc" text-anchor="middle">5150</text>
<text x="534" y="326" font-family="Liberation Sans" font-size="13.5" fill="#5a9edc" text-anchor="middle" transform="rotate(-90 534 326)">2150</text>
<rect x="46.6" y="456.9" width="86.6" height="24.7" fill="#fff" stroke="#8fb4d0" stroke-width="1"/>
<rect x="366.8" y="456.9" width="86.6" height="24.7" fill="#fff" stroke="#8fb4d0" stroke-width="1"/>
<text x="89.9" y="474" font-family="Liberation Sans" font-size="12.5" fill="#5a9edc" text-anchor="middle">00.EW.003</text>
<text x="410.1" y="474" font-family="Liberation Sans" font-size="12.5" fill="#5a9edc" text-anchor="middle">00.EW.004</text>
<path d="M303.3 580.2L269.7 612.8L303.3 647.8Z" fill="#3b8fe3"/>
<circle cx="303.5" cy="613.3" r="22.8" fill="#fff" stroke="#7aa8d0" stroke-width="0.9"/>
<path d="M303.3 580V648" stroke="#5b8fc0" stroke-width="1"/>
<text x="294.5" y="613.5" font-family="Liberation Sans" font-size="12.5" fill="#5a9edc" text-anchor="middle" transform="rotate(90 294.5 613.5)" dominant-baseline="middle">AXXX</text>
<text x="313" y="617" font-family="Liberation Sans" font-size="11" fill="#5a9edc" text-anchor="middle">X</text>
<path d="M779.4 587.7V709.8" stroke="#222" stroke-width="1"/>
<circle cx="899.5" cy="674.5" r="3.5" fill="none" stroke="#888" stroke-width="0.8"/><path d="M900 676L900 688L903 685L906 690L907.5 689L905 684L909 684Z" fill="#fff" stroke="#555" stroke-width="0.7"/>
<path d="M15 287L24 291" stroke="#333" stroke-width="0.9"/>
<circle cx="1511.6" cy="195" r="32" fill="none" stroke="#5b9bd5" stroke-width="0.9"/>
<text x="1510" y="202" font-family="Liberation Sans" font-size="19" fill="#4a94d8" text-anchor="middle">+3.0m</text>
<path d="M1440 359.5H1920M1440 983H1920" stroke="#222" stroke-width="1.2"/>
<text transform="translate(1442.6 893) scale(0.84 1)" font-family="Liberation Sans" font-weight="bold" font-size="120" fill="#000" stroke="#000" stroke-width="5">S</text>
<text transform="translate(1509.4 893) scale(0.96 1)" font-family="Liberation Sans" font-weight="bold" font-size="120" fill="#000" stroke="#000" stroke-width="5">t</text>
<text transform="translate(1542.5 893) scale(1.03 1)" font-family="Liberation Sans" font-weight="bold" font-size="120" fill="#000" stroke="#000" stroke-width="5">u</text>
<text transform="translate(1614.7 893) scale(1.065 1)" font-family="Liberation Sans" font-weight="bold" font-size="120" fill="#000" stroke="#000" stroke-width="5">d</text>
<text transform="translate(1686.2 893) scale(1.08 1)" font-family="Liberation Sans" font-weight="bold" font-size="120" fill="#000" stroke="#000" stroke-width="5">i</text>
<text transform="translate(1716.3 893) scale(1.056 1)" font-family="Liberation Sans" font-weight="bold" font-size="120" fill="#000" stroke="#000" stroke-width="5">o</text>
<text transform="translate(1823.6 893) scale(0.89 1)" font-family="Liberation Sans" font-weight="bold" font-size="120" fill="#000" stroke="#000" stroke-width="5">R</text>
<text transform="translate(1896.8 893) scale(0.9 1)" font-family="Liberation Sans" font-weight="bold" font-size="120" fill="#000" stroke="#000" stroke-width="5">B</text>
</svg>
<div class="t" style="left:738.5px;top:562.5px;font-size:15.3px;font-weight:bold;color:#111">Area in abeyance</div>
<div class="t" style="left:738.5px;top:590px;font-size:12.8px;line-height:13.6px;color:#333">Frame and glazing detailed design subject to manufacturer's input.<br>We await receipt of this, before concluding our own proposals.</div>
<div class="t" style="left:1656.5px;top:44.5px;font-size:20.6px;color:#111">Ceiling Heights</div>
<div class="t" style="left:1425px;top:169px;font-size:22px;font-weight:bold;color:#000">Construct</div>
<div class="t" style="left:1725.3px;top:169px;font-size:22px;font-weight:bold;color:#000">laimers</div>
<div class="t" style="left:1425px;top:230.5px;font-size:13px;line-height:15.8px;color:#222">INSERT RELEVANT<br>DETAILS AND/OR</div>
<div class="t" style="left:1724px;top:230.5px;font-size:13px;color:#222">AT NEED TO ACCOMPANY ALL</div>
<div class="t" style="left:1425px;top:274.5px;font-size:13px;line-height:15.8px;color:#222">ALSO, USE THIS SPACE<br>PLAN COURSE.</div>
<div class="t" style="left:1723.3px;top:274.5px;font-size:13px;color:#222">OVER YOURSELF. SEE LESSON</div>
<div class="t" style="left:1450.7px;top:772.5px;font-size:14.2px;line-height:15px;color:#111">www.studiorba.co.uk<br>@studiorba</div>
<div class="t" style="left:1650px;top:772.5px;font-size:13.8px;line-height:15px;color:#111">Royal Albert Dock, Unit 24,<br>Edward Pavilion, Liverpool, L3 4AF</div>
<div class="t" style="left:1426px;top:843px;font-size:16px;color:#111;word-spacing:40px">Project Name and Address</div>
<svg width="30" height="30" style="left:1425px;top:773px"><path d="M15 1L15 26L20.5 20.5L25 28L28 26.5L23.5 19L31 19Z" fill="#111" transform="translate(-14 0) scale(0.95)"/></svg>
<svg width="22" height="30" style="left:1620px;top:773px"><path d="M10.5 1C5 1 1 5 1 10.5C1 17 10.5 28 10.5 28C10.5 28 20 17 20 10.5C20 5 16 1 10.5 1ZM10.5 6A4.3 4.3 0 1 1 10.5 14.6A4.3 4.3 0 1 1 10.5 6Z" fill="#111" fill-rule="evenodd"/></svg>
<div class="a" style="left:1900px;top:775px;width:12px;height:29px;border:2.5px solid #111;border-right:none;border-radius:3px 0 0 3px"></div>
</div><div class="a" style="left:1541px;top:219px;width:204px;height:316px;border-radius:6px;box-shadow:0 10px 32px rgba(0,0,0,0.24)"></div>
<div class="a" style="left:1540.8px;top:217px;width:204.3px;height:318.5px;background:#f0f0f0;border:1px solid #c9c9c9;border-radius:4px;overflow:hidden">
<div class="a" style="left:0;top:0;width:204px;height:22px;background:#fff"></div>
</div>
<svg width="14" height="14" style="left:1546px;top:221px"><path d="M2 11L7 6M6 2C8 1 10 2 10 4L8 6" stroke="#666" stroke-width="1.6" fill="none"/><rect x="7" y="7" width="6" height="6" fill="#fff" stroke="#777" stroke-width="0.8"/></svg>
<div class="t" style="left:1562.8px;top:223px;font-size:9px;color:#9a9a9a">Element Selection</div>
<div class="a" style="left:1656.5px;top:227.5px;width:7px;height:1px;background:#999"></div>
<div class="a" style="left:1690px;top:223.5px;width:6px;height:6px;border:1px solid #e4e4e4"></div>
<svg width="12" height="12" style="left:1722px;top:221.5px"><path d="M2 2L10 10M10 2L2 10" stroke="#888" stroke-width="0.9"/></svg>
<div class="a" style="left:1549.2px;top:248.2px;width:82px;height:19px;background:#f7f7f7;border:1px solid #cacaca"></div>
<div class="a" style="left:1551px;top:250px;width:15.5px;height:16px;background:#6ea4dc"></div>
<div class="a" style="left:1549.2px;top:279.3px;width:82px;height:19px;background:#f7f7f7;border:1px solid #cacaca"></div>
<div class="a" style="left:1551px;top:281px;width:15.5px;height:16px;background:#6ea4dc"></div>
<svg width="200" height="100" style="left:1540px;top:240px" viewBox="1540 240 200 100">
<circle cx="1558.8" cy="258.3" r="4.5" fill="none" stroke="#cfe6fa" stroke-width="1"/><path d="M1558.8 252.5V264M1553 258.3H1564.5" stroke="#cfe6fa" stroke-width="1"/>
<rect x="1569.5" y="255" width="10" height="6.5" fill="none" stroke="#3a9ad8" stroke-width="1" stroke-dasharray="2 1.3"/>
<path d="M1586 255.5H1595L1593 261.5H1584Z" fill="none" stroke="#3a9ad8" stroke-width="1" stroke-dasharray="2 1.3"/>
<circle cx="1606.3" cy="258.3" r="5" fill="none" stroke="#3a9ad8" stroke-width="1" stroke-dasharray="2 1.3"/>
<path d="M1617 263.5L1627 253" stroke="#3a9ad8" stroke-width="1" stroke-dasharray="2 1.3"/>
<rect x="1648" y="250" width="12" height="12" fill="#1a7ad0" stroke="#0a3a80" stroke-width="0.8"/>
<circle cx="1660.2" cy="262" r="3.8" fill="#fff" stroke="#d82020" stroke-width="1.4"/><path d="M1657.5 259.3L1663 264.7" stroke="#d82020" stroke-width="1.3"/>
<path d="M1558 284C1556 284 1555 286 1556 289L1559 293L1560 290L1562 293.5L1563 293L1561 289.5H1564Z" fill="#111"/><circle cx="1558.5" cy="287" r="3" fill="none" stroke="#cfe6fa" stroke-width="0.7" stroke-dasharray="1 1"/>
<path d="M1574.5 284.5V294M1569.5 289.2H1579.5" stroke="#1a8ae0" stroke-width="2.2"/>
<path d="M1585 289.2H1595" stroke="#1a8ae0" stroke-width="2.2"/>
<rect x="1601" y="284" width="10" height="10" fill="#fff" stroke="#1a8ae0" stroke-width="1"/><path d="M1601 294L1611 284V294Z" fill="#1a8ae0"/>
<circle cx="1622" cy="289.2" r="5.2" fill="none" stroke="#1a8ae0" stroke-width="1" stroke-dasharray="1.6 1.2"/><circle cx="1620" cy="288" r="0.9" fill="#333"/><circle cx="1624" cy="288" r="0.9" fill="#333"/><circle cx="1622" cy="291" r="0.9" fill="#333"/>
<rect x="1648" y="281" width="12" height="12" fill="#9a9a9a"/><path d="M1658.5 286V297L1661 294.5L1663 298L1664.5 297L1662.5 293.5H1666Z" fill="#666"/>
<path d="M1728.5 296.5H1736L1732.2 292Z" fill="#111"/>
</svg>
<div class="a" style="left:1554.4px;top:309.7px;width:186.6px;height:15px;background:#ececec;border-top:1px solid #e2e2e2"></div>
<div class="a" style="left:1599.8px;top:310px;width:1px;height:14px;background:#dcdcdc"></div>
<div class="a" style="left:1646px;top:310px;width:1px;height:14px;background:#dcdcdc"></div>
<div class="a" style="left:1693px;top:310px;width:1px;height:14px;background:#dcdcdc"></div>
<div class="a" style="left:1549.5px;top:324.6px;width:187.5px;height:16px;background:#ededed"></div>
<div class="a" style="left:1549.5px;top:324.6px;width:61.5px;height:16px;background:#f7f7f7"></div>
<div class="a" style="left:1612px;top:326px;width:1px;height:14px;background:#dcdcdc"></div>
<div class="a" style="left:1673.5px;top:326px;width:1px;height:14px;background:#dcdcdc"></div>
<svg width="200" height="40" style="left:1540px;top:305px" viewBox="1540 305 200 40">
<path d="M1572 315L1577 313L1582 315L1577 317Z M1572 317L1577 319L1582 317 M1572 319L1577 321L1582 319" stroke="#aaa" stroke-width="0.8" fill="none"/>
<rect x="1617.5" y="311.5" width="11" height="11" rx="1" fill="#fff" stroke="#555" stroke-width="0.8"/><path d="M1619 314H1627M1619 316H1627M1619 318H1627M1619 320H1627" stroke-width="1.6" stroke="url(#rb)"/>
<defs><linearGradient id="rb" x1="0" y1="0" x2="0" y2="1"><stop offset="0" stop-color="#e03030"/><stop offset="0.5" stop-color="#f0d020"/><stop offset="1" stop-color="#2a8ae0"/></linearGradient></defs>
<path d="M1665 312H1674M1665 315H1674M1665 318H1674M1665 321H1674" stroke="#666" stroke-width="0.8" stroke-dasharray="1.5 0.8"/>
<path d="M1712.5 312H1721.5M1712.5 315H1721.5M1712.5 318H1721.5M1712.5 321H1721.5" stroke="#222" stroke-width="1.1"/>
<path d="M1575.5 329L1580 325M1577 333C1576 331 1580 327 1582 328" stroke="#444" stroke-width="0.9" fill="none"/><circle cx="1582.5" cy="334.5" r="1.8" fill="none" stroke="#444" stroke-width="0.9"/>
<path d="M1637.5 325V335C1637.5 337 1642 337 1642 335M1645 325V334M1640 325V333" stroke="#555" stroke-width="0.8" fill="none"/>
<path d="M1699 332L1704 327L1712 329L1707 335Z" fill="#2a8ae0"/><path d="M1702 331L1706 329L1709 331" stroke="#1a3a70" stroke-width="1.2"/>
</svg>
<div class="a" style="left:1549.5px;top:340.2px;width:188.5px;height:188px;background:#f0f0f0;border:1px solid #cfcfcf;border-top:none"></div>
<div class="a" style="left:1734px;top:340px;width:4px;height:184px;border-left:1px solid #d4d4d4"></div>
<div class="a" style="left:1557.3px;top:348px;width:173.3px;height:173px;background:#fff;border:1px solid #a9a9a9"></div>
<div class="a" style="left:1717px;top:349px;width:13px;height:171px;background:#f1f1f1"></div>
<div class="a" style="left:1722.5px;top:362px;width:2px;height:24px;background:#c2c2c2"></div>
<div class="a" style="left:1661px;top:349px;width:1px;height:13px;background:#e8e8e8"></div>
<svg width="10" height="6" style="left:1671px;top:350px"><path d="M1 1L4.5 4L8 1" stroke="#888" stroke-width="0.8" fill="none"/></svg>
<div class="t" style="left:1561.5px;top:352px;font-size:8.9px;color:#111">Element Type</div>
<div class="t" style="left:1561px;top:368.3px;font-size:8.9px;color:#111">Acute3D Mesh</div>
<div class="t" style="left:1561px;top:381.1px;font-size:8.9px;color:#111">Annotation Cell</div>
<div class="t" style="left:1561px;top:394.0px;font-size:8.9px;color:#111">Arc</div>
<div class="t" style="left:1561px;top:406.8px;font-size:8.9px;color:#111">Associative Region</div>
<div class="t" style="left:1561px;top:419.6px;font-size:8.9px;color:#111">Bspline Curve</div>
<div class="t" style="left:1561px;top:432.5px;font-size:8.9px;color:#111">Bspline Surface</div>
<div class="t" style="left:1561px;top:445.3px;font-size:8.9px;color:#111">Cell</div>
<div class="t" style="left:1561px;top:458.1px;font-size:8.9px;color:#111">Civil Custom Graphics</div>
<div class="t" style="left:1561px;top:470.9px;font-size:8.9px;color:#111">Complex Chain</div>
<div class="t" style="left:1561px;top:483.8px;font-size:8.9px;color:#111">Complex Shape</div>
<div class="t" style="left:1561px;top:496.6px;font-size:8.9px;color:#111">Cone</div>
<div class="t" style="left:1561px;top:509.4px;font-size:8.9px;color:#111">Curve</div><div class="a" style="left:647px;top:997.5px;width:1273px;height:25px;background:#d5d5d5"></div>
<div class="a" style="left:0;top:1022.5px;width:1920px;height:1px;background:#e2e2e2"></div>
<svg width="100" height="24" style="left:0;top:998px" viewBox="0 998 100 24">
<circle cx="13.7" cy="1010.5" r="8.5" fill="#cfcfcf" stroke="#bdbdbd" stroke-width="1"/><path d="M9 1010.5L13 1006.5V1008.5H18V1012.5H13V1014.5Z" fill="#f4f4f4"/>
<path d="M27.5 1009.5H32.5L30 1012Z" fill="#777"/>
<circle cx="46" cy="1010.5" r="8.5" fill="#cfcfcf" stroke="#bdbdbd" stroke-width="1"/><path d="M51 1010.5L47 1006.5V1008.5H42V1012.5H47V1014.5Z" fill="#f4f4f4"/>
<path d="M59.5 1009.5H64.5L62 1012Z" fill="#777"/>
<ellipse cx="78.5" cy="1011.5" rx="9" ry="5" fill="#cfcfcf"/><path d="M72 1008C72 1004 76 1002 78 1003" stroke="#c4c4c4" stroke-width="1.5" fill="none"/>
<path d="M92 1009.5H97L94.5 1012Z" fill="#777"/>
</svg>
<div class="a" style="left:101.5px;top:1003.5px;width:110px;height:14px;background:#fff;border:1px solid #d0d0d0"></div>
<svg width="14" height="14" style="left:102px;top:1004px"><rect x="1" y="1" width="7" height="6" fill="none" stroke="#3a9ad8" stroke-width="1"/><rect x="4" y="4" width="8" height="7" fill="#fff" stroke="#3a9ad8" stroke-width="1"/></svg>
<div class="t" style="left:118.5px;top:1005.5px;font-size:8.8px;color:#333">Studio RBA A1 Land</div>
<div class="a" style="left:202px;top:1009px;border:3px solid transparent;border-top:3.5px solid #222;border-bottom:none"></div>
<div class="a" style="left:214px;top:1000px;width:1px;height:20px;background:#ccc"></div>
<svg width="20" height="18" style="left:218px;top:1002px"><rect x="1" y="1" width="12" height="9" fill="#fff" stroke="#2a8ad0" stroke-width="1.2"/><rect x="1" y="1" width="12" height="2" fill="#2a8ad0"/><rect x="6" y="5.5" width="12" height="9" fill="#fff" stroke="#2a8ad0" stroke-width="1.2"/><rect x="6" y="5.5" width="12" height="2" fill="#2a8ad0"/></svg>
<div class="a" style="left:240.5px;top:1000px;width:1px;height:20px;background:#ccc"></div>
<div class="a" style="left:243px;top:1003px;width:96px;height:14.5px;background:#f0f0f0;border:1px solid #d8d8d8"></div>
<div class="a" style="left:243px;top:1003px;width:11px;height:14.5px;background:#8ab8e6;border:1px solid #5a90c8"></div>
<div class="c" style="left:248.5px;top:1005.5px;font-size:9.3px;color:#222">1</div>
<div class="a" style="left:254.5px;top:1004px;width:1px;height:13px;background:#333"></div>
<div class="c" style="left:260.5px;top:1005.5px;font-size:9.3px;color:#222">2</div>
<div class="a" style="left:266.5px;top:1004px;width:1px;height:13px;background:#333"></div>
<div class="c" style="left:272.5px;top:1005.5px;font-size:9.3px;color:#222">3</div>
<div class="a" style="left:278.5px;top:1004px;width:1px;height:13px;background:#333"></div>
<div class="c" style="left:284.5px;top:1005.5px;font-size:9.3px;color:#222">4</div>
<div class="a" style="left:290.5px;top:1004px;width:1px;height:13px;background:#333"></div>
<div class="c" style="left:296.5px;top:1005.5px;font-size:9.3px;color:#222">5</div>
<div class="a" style="left:302.5px;top:1004px;width:1px;height:13px;background:#333"></div>
<div class="c" style="left:308.5px;top:1005.5px;font-size:9.3px;color:#222">6</div>
<div class="a" style="left:314.5px;top:1004px;width:1px;height:13px;background:#333"></div>
<div class="c" style="left:320.5px;top:1005.5px;font-size:9.3px;color:#222">7</div>
<div class="a" style="left:326.5px;top:1004px;width:1px;height:13px;background:#333"></div>
<div class="c" style="left:332.5px;top:1005.5px;font-size:9.3px;color:#222">8</div>
<div class="a" style="left:342.5px;top:999px;width:1px;height:22px;background:#ccc"></div>
<div class="a" style="left:346px;top:1004px;width:1px;height:12px;border-left:1px dotted #888"></div>
<div class="t" style="left:357.5px;top:1004.5px;font-size:11.5px;font-weight:bold;color:#111">X</div>
<div class="a" style="left:371px;top:1003.5px;width:118.5px;height:14px;background:#fff;border:1px solid #c6c6c6"><div class="t" style="left:1.5px;top:2px;font-size:9px;color:#888">544.741</div></div>
<div class="a" style="left:495px;top:999px;width:1px;height:22px;background:#ccc"></div>
<div class="t" style="left:503.5px;top:1004.5px;font-size:11.5px;font-weight:bold;color:#111">Y</div>
<div class="a" style="left:516.5px;top:1003.5px;width:119px;height:14px;background:#fff;border:1px solid #c6c6c6"><div class="t" style="left:1.5px;top:2px;font-size:9px;color:#888">148.151</div></div>
<div class="t" style="left:0px;top:1030.3px;font-size:8.95px;color:#333">Element Selection &gt; Identify element to add to set</div>
<div class="a" style="left:217px;top:1026px;width:1px;height:15px;border-left:1px dotted #999"></div>
<div class="a" style="left:220.5px;top:1024px;width:1px;height:18px;background:#d0d0d0"></div>
<svg width="6" height="18" style="left:237px;top:1024px"><path d="M3 3V17" stroke="#333" stroke-width="0.9"/><path d="M1 4L3 1.5L4 4Z" fill="#111"/></svg>
<div class="a" style="left:1485px;top:1025px;width:1px;height:17px;background:#bcbcbc"></div>
<div class="a" style="left:1506.8px;top:1025px;width:1px;height:17px;background:#bcbcbc"></div>
<div class="a" style="left:1529.3px;top:1025px;width:1px;height:17px;background:#bcbcbc"></div>
<div class="a" style="left:1629.5px;top:1025px;width:1px;height:17px;background:#bcbcbc"></div>
<div class="a" style="left:1718.5px;top:1025px;width:1px;height:17px;background:#bcbcbc"></div>
<div class="a" style="left:1741px;top:1025px;width:1px;height:17px;background:#bcbcbc"></div>
<div class="a" style="left:1763.5px;top:1025px;width:1px;height:17px;background:#bcbcbc"></div>
<div class="a" style="left:1786px;top:1025px;width:1px;height:17px;background:#bcbcbc"></div>
<div class="a" style="left:1808.5px;top:1025px;width:1px;height:17px;background:#bcbcbc"></div>
<div class="a" style="left:1830.8px;top:1025px;width:1px;height:17px;background:#bcbcbc"></div>
<div class="a" style="left:1853.4px;top:1025px;width:1px;height:17px;background:#bcbcbc"></div>
<div class="a" style="left:1876px;top:1025px;width:1px;height:17px;background:#bcbcbc"></div>
<svg width="14" height="14" style="left:1489px;top:1027px"><rect x="2" y="2" width="9" height="9" fill="#eaf3fb" stroke="#2a8ad0" stroke-width="1"/><rect x="5" y="5" width="3" height="3" fill="#2a8ad0"/><path d="M1 1H3M10 1H12M1 12H3M10 12H12" stroke="#2a8ad0"/></svg>
<svg width="14" height="14" style="left:1512px;top:1026px"><path d="M4 7V4.5C4 2 9 2 9 4.5V7" stroke="#777" stroke-width="1.2" fill="none"/><rect x="2.5" y="7" width="8.5" height="6" fill="#c8b020"/></svg>
<div class="t" style="left:1532.8px;top:1029.5px;font-size:9.3px;color:#222">Logo and Notes</div>
<svg width="14" height="14" style="left:1790px;top:1027px"><path d="M2 2H10C12 2 12 5 10 5V11C10 13 8 13 7 12H2V5C0 5 0 2 2 2Z" fill="#f4f4f4" stroke="#999" stroke-width="0.8"/></svg>
<svg width="14" height="14" style="left:1813px;top:1026px"><path d="M1 7L7 1.5L13 7" stroke="#e8901a" stroke-width="1.8" fill="none"/><rect x="3.5" y="6.5" width="7" height="6" fill="#f4f4f4" stroke="#888" stroke-width="0.6"/><rect x="6" y="9" width="2.5" height="3.5" fill="#2a6ad0"/></svg>
<svg width="16" height="16" style="left:1858px;top:1026px"><rect x="2" y="1" width="9" height="13" fill="#1a6ac8"/><path d="M1 3H3M1 6H3M1 9H3M1 12H3" stroke="#fff" stroke-width="0.8"/><circle cx="11.5" cy="11.5" r="3.5" fill="#fff" stroke="#d82020" stroke-width="1.2"/><path d="M9.5 9.5L13.5 13.5" stroke="#d82020" stroke-width="1.2"/></svg>
<svg width="14" height="14" style="left:1903px;top:1027px"><rect x="2" y="2" width="10" height="10" fill="none" stroke="#bbb" stroke-width="1"/><rect x="4" y="4" width="6" height="6" fill="none" stroke="#bbb" stroke-width="0.8"/></svg>
</body></html>
